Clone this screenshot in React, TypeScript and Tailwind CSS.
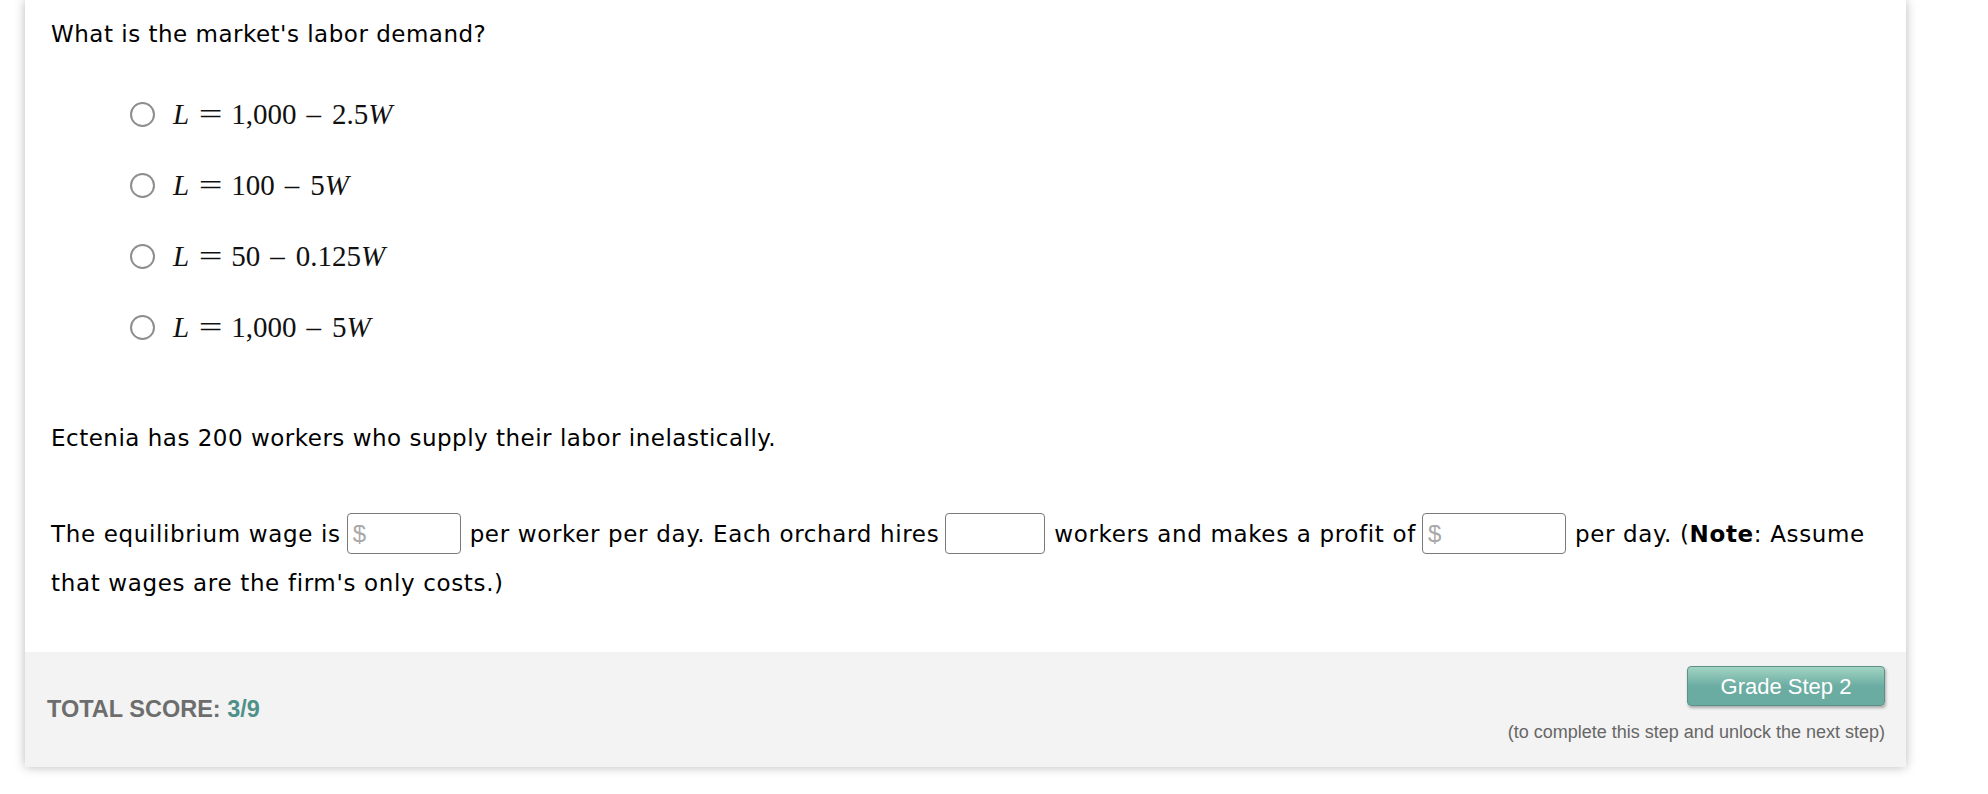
import React from "react";

const options = [
  { a: "1,000", b: "2.5" },
  { a: "100", b: "5" },
  { a: "50", b: "0.125" },
  { a: "1,000", b: "5" },
];

function Radio() {
  return (
    <span className="inline-block w-[25px] h-[25px] rounded-full border-2 border-[#8e8e8e] bg-white shrink-0" />
  );
}

function MoneyInput({ width, dollar }: { width: string; dollar?: boolean }) {
  return (
    <span
      className={`inline-flex items-center align-middle h-[41px] ${width} border border-[#7a7a7a] rounded-[4px] bg-white ml-[6px] mr-[9px] pl-[5px] -mt-[4px]`}
    >
      {dollar && <span className="text-[#a9a9a9] text-[24px] tracking-normal font-['Liberation_Sans']">$</span>}
    </span>
  );
}

export default function App() {
  return (
    <div className="bg-white min-h-screen w-[1988px] h-[794px] overflow-hidden font-['DejaVu_Sans',sans-serif]">
      <div className="ml-[25px] w-[1881px] bg-white shadow-[0_0_10px_rgba(0,0,0,0.28)]">
        <div className="px-[26px] pt-[19px] pb-[44px] text-[23px] tracking-[0.5px] text-black">
          <p className="leading-[30px]">What is the market's labor demand?</p>

          <div className="mt-[51px] ml-[79px] flex flex-col gap-[42px] tracking-normal">
            {options.map((o, i) => (
              <div key={i} className="flex items-center h-[29px] gap-[18px]">
                <Radio />
                <span className="font-['Liberation_Serif',serif] text-[29px] leading-none text-[#111]">
                  <i>L</i>
                  <span className="inline-block w-[23px] text-center scale-x-[1.45] ml-[10px] mr-[9px]">=</span>
                  {o.a}
                  <span className="ml-[10px] mr-[11px]">–</span>
                  {o.b}
                  <i>W</i>
                </span>
              </div>
            ))}
          </div>

          <p className="mt-[81px] leading-[30px]">Ectenia has 200 workers who supply their labor inelastically.</p>

          <p className="mt-[57px] leading-[49px] tracking-[0.65px]">
            The equilibrium wage is
            <MoneyInput width="w-[114px]" dollar />
            per worker per day. Each orchard hires
            <MoneyInput width="w-[100px]" />
            workers and makes a profit of
            <MoneyInput width="w-[144px]" dollar />
            per day. (<b>Note</b>: Assume that wages are the firm's only costs.)
          </p>
        </div>

        <div className="bg-[#f3f3f3] h-[115px] flex justify-between pl-[22px] pr-[21px] font-['Liberation_Sans',sans-serif]">
          <div className="self-center text-[23.5px] font-bold text-[#6d6d6d]">
            TOTAL SCORE: <span className="text-[#4f9189]">3/9</span>
          </div>
          <div className="flex flex-col items-end pt-[14px] gap-[17px]">
            <button className="w-[198px] h-[40px] rounded-[4px] border border-[#5d9188] bg-gradient-to-b from-[#a1d4c2] via-[#6cada3] to-[#6aaba1] text-white text-[22px] shadow-[1px_2px_3px_rgba(0,0,0,0.3)]">
              Grade Step 2
            </button>
            <div className="text-[18px] text-[#666] leading-none">
              (to complete this step and unlock the next step)
            </div>
          </div>
        </div>
      </div>
    </div>
  );
}
